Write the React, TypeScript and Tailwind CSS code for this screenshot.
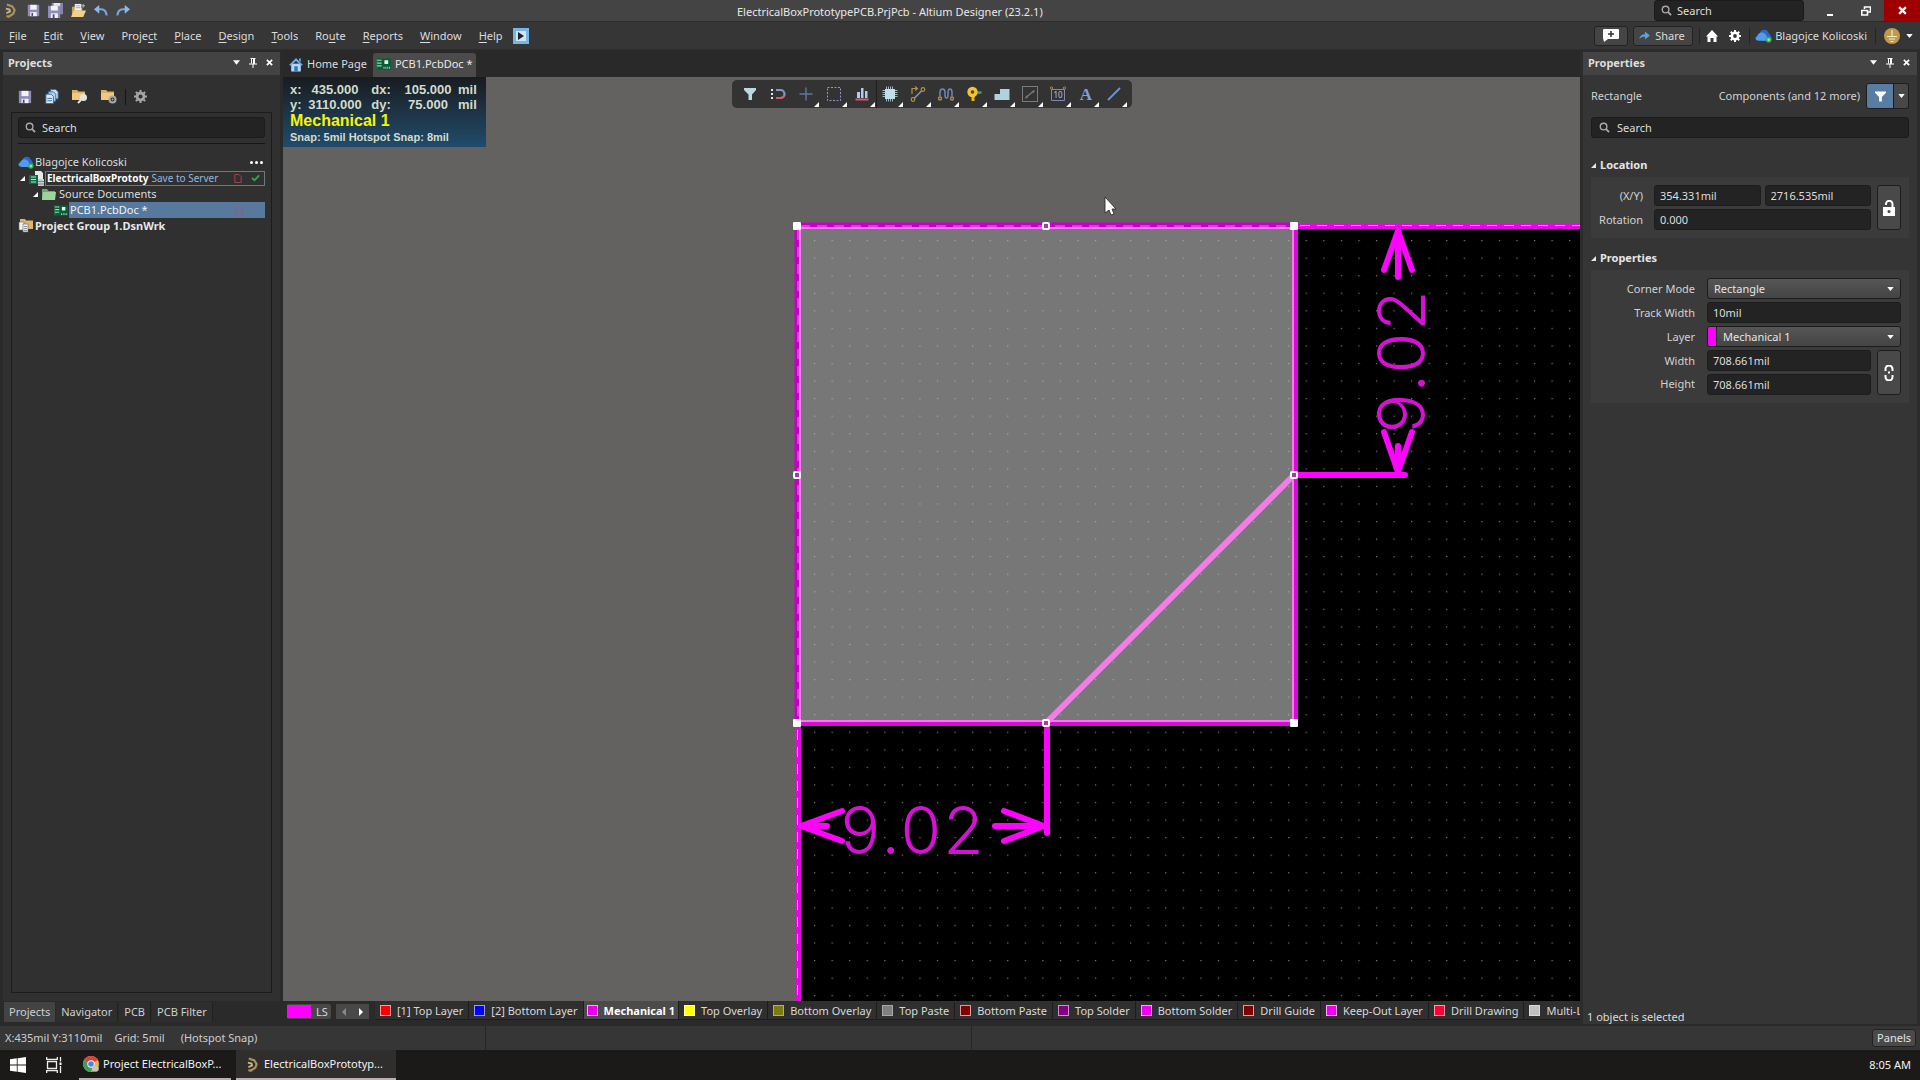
import type { ReactNode } from 'react';

/* ---------- small icons ---------- */

function Altium({ className }: { className: string }) {
  return (
    <svg viewBox="0 0 12 16" className={className} fill="none" stroke="#a8935a" strokeWidth="2.400">
      <path d="M2 1.500L8 3.500L10.500 7.500L9 11.500L4 14.800L1.500 14" />
      <path d="M1 6L5 7L5.500 9L1.500 11" stroke="#c9b780" strokeWidth="2" />
    </svg>
  );
}

function Floppy({ className, back = false }: { className: string; back?: boolean }) {
  return (
    <svg viewBox="0 0 16 16" className={className}>
      {back && <path d="M4 0H16V12H4Z" fill="#8583a8" />}
      {back && <path d="M6 0H13V4H6Z" fill="#e6e6f4" />}
      <path d={back ? 'M0 3H13V16H0Z' : 'M1 1H15V15H1Z'} fill="#8f8db8" />
      <path d={back ? 'M3 3H10.500V8H3Z' : 'M4 1H12V7H4Z'} fill="#f1f1f8" />
      <path d={back ? 'M3 11H10.500V16H3Z' : 'M4 10H12V15H4Z'} fill="#f1f1f8" />
      <path d={back ? 'M5 12H7V16H5Z' : 'M5.500 11H7.500V15H5.500Z'} fill="#4c4b66" />
    </svg>
  );
}

function OpenFolder({ className }: { className: string }) {
  return (
    <svg viewBox="0 0 16 16" className={className}>
      <path d="M1 4H6L7 5H12V14H1Z" fill="#c9a35e" />
      <path d="M4 1H11V8H4Z" fill="#f2f2f2" />
      <path d="M5 3H10M5 5H10" stroke="#9aa" />
      <path d="M3 8H16L13 15H0Z" fill="#f3d08a" />
      <path d="M13 1V5M11 3H15" stroke="#9cc3ee" />
    </svg>
  );
}

function Arrow({ className }: { className: string }) {
  return (
    <svg viewBox="0 0 16 16" className={className} fill="none" stroke="#7aa7dc">
      <path d="M3 6H8C12 6 14 9 14.500 13" strokeWidth="2.500" />
      <path d="M0 6L6 1V11Z" fill="#8fb8e8" stroke="none" />
    </svg>
  );
}

function Magnifier({ className }: { className: string }) {
  return (
    <svg viewBox="0 0 12 12" className={className} fill="none" stroke="#a9a9a9" strokeWidth="1.500">
      <circle cx="5" cy="5" r="3.600" />
      <path d="M7.800 7.800L11 11" strokeWidth="2" />
    </svg>
  );
}

function Cloud({ className }: { className: string }) {
  return (
    <svg viewBox="0 0 18 14" className={className}>
      <path d="M5 4C6 0 12 -1 14 3C15.500 5 18 8 17.500 10.500C17 12 15.500 12 14.500 12H7Z" fill="#2d67c8" />
      <path d="M4 12C0 12 -0.500 8 2.500 7C3 3.500 8 2 10.500 4.500C12.500 6 12 7.500 13 8.500C14.500 10 14 12 12 12Z" fill="#4f9cf0" />
      <circle cx="14.500" cy="11" r="3" fill="#35b050" />
      <circle cx="14.500" cy="11" r="1.500" fill="#8fe39d" />
    </svg>
  );
}

function PcbIcon({ className }: { className: string }) {
  return (
    <svg viewBox="0 0 16 12" className={className}>
      <path d="M0 0H16V12H0Z" fill="#0d5a38" />
      <path d="M1 2H6M1 5H6M1 8H6" stroke="#8fe0b4" strokeWidth="1.200" />
      <path d="M1 0.500V11" stroke="#3aa873" strokeDasharray="1 1" />
      <path d="M9 2H13V6H9Z" fill="#d8fbe8" />
      <path d="M8 10H15" stroke="#8fe0b4" strokeWidth="2" strokeDasharray="1 1" />
    </svg>
  );
}

function Caret({ className }: { className: string }) {
  return (
    <svg viewBox="0 0 8 5" className={className} fill="currentColor">
      <path d="M0 0H8L4 5Z" />
    </svg>
  );
}

function Corner({ className }: { className: string }) {
  return (
    <svg viewBox="0 0 5 5" className={className} fill="currentColor">
      <path d="M5 0V5H0Z" />
    </svg>
  );
}

function Pin({ className }: { className: string }) {
  return (
    <svg viewBox="0 0 8 10" className={className} fill="none" stroke="currentColor">
      <path d="M1.500 0.500H6.500M2.500 0.500V5.500M0 6H8M4 6V10" />
      <path d="M5 0V6" strokeWidth="2" />
    </svg>
  );
}

function Cross({ className }: { className: string }) {
  return (
    <svg viewBox="0 0 8 8" className={className} stroke="currentColor" strokeWidth="2">
      <path d="M1 1L7 7M7 1L1 7" />
    </svg>
  );
}

function Gear({ className }: { className: string }) {
  return (
    <svg viewBox="0 0 14 14" className={className} fill="none" stroke="currentColor">
      <circle cx="7" cy="7" r="3.700" strokeWidth="3" />
      <path d="M7 0V3M7 11V14M0 7H3M11 7H14M2 2L4.200 4.200M9.800 9.800L12 12M2 12L4.200 9.800M9.800 4.200L12 2" strokeWidth="2.200" />
    </svg>
  );
}

function Funnel({ className }: { className: string }) {
  return (
    <svg viewBox="0 0 12 12" className={className} fill="currentColor">
      <path d="M0 0.500H12V2L7.500 6.500V11.500H4.500V6.500L0 2Z" />
    </svg>
  );
}

function DocMark({ className }: { className: string }) {
  return (
    <svg viewBox="0 0 8 10" className={className} fill="none" stroke="currentColor">
      <path d="M0.500 0.500H5L7.500 3V9.500H0.500Z" />
    </svg>
  );
}

/* ---------- title and menu ---------- */

function SearchBox({ id, className }: { id: string; className: string }) {
  return (
    <div className={`flex items-center rounded-[3px] border border-[#1b1b1b] bg-[#232323] ${className}`}>
      <label htmlFor={id} aria-label="Search">
        <Magnifier className="size-[11px]" />
      </label>
      <input
        id={id}
        type="text"
        placeholder="Search"
        className="w-full min-w-0 bg-transparent text-[#dedede] outline-none placeholder:text-[#dedede]"
      />
    </div>
  );
}

function TitleBar() {
  return (
    <header className="relative flex h-[22px] shrink-0 items-center border-b border-[#2c2c2c] bg-[#444444]">
      <div className="flex items-center gap-2 pl-[5px]">
        <Altium className="h-[15px] w-[11px]" />
        <button aria-label="Save" className="ml-[3px]"><Floppy className="size-[13px]" /></button>
        <button aria-label="Save all"><Floppy back className="size-[15px]" /></button>
        <button aria-label="Open"><OpenFolder className="size-[15px]" /></button>
        <button aria-label="Undo"><Arrow className="size-[14px]" /></button>
        <button aria-label="Redo"><Arrow className="size-[14px] -scale-x-100" /></button>
      </div>
      <h1 className="absolute left-[737px] top-1 leading-4 text-[#e8e8e8]">
        ElectricalBoxPrototypePCB.PrjPcb - Altium Designer (23.2.1)
      </h1>
      <div className="ml-auto flex h-full items-center">
        <SearchBox id="search-global" className="mr-2 h-[21px] w-[150px] gap-[5px] px-[6px]" />
        <button aria-label="Minimize" className="flex h-full w-9 items-center justify-center">
          <span className="mt-2 h-[2px] w-[6px] bg-white" />
        </button>
        <button aria-label="Restore" className="flex h-full w-9 items-center justify-center">
          <svg viewBox="0 0 10 10" className="size-[10px]" fill="none" stroke="#fff">
            <path d="M3.500 3V1H9.500V6H7" strokeWidth="1.600" />
            <path d="M0.800 4.500H6.500V9H0.800Z" strokeWidth="1.600" />
          </svg>
        </button>
        <button aria-label="Close" className="flex h-full w-9 items-center justify-center bg-[#9c0000] text-white">
          <Cross className="size-[9px]" />
        </button>
      </div>
    </header>
  );
}

const MENU: [string, string, string][] = [
  ['', 'F', 'ile'], ['', 'E', 'dit'], ['', 'V', 'iew'], ['Proje', 'c', 't'], ['', 'P', 'lace'], ['', 'D', 'esign'],
  ['', 'T', 'ools'], ['Ro', 'u', 'te'], ['', 'R', 'eports'], ['', 'W', 'indow'], ['', 'H', 'elp'],
];

function MenuBar() {
  return (
    <div className="flex h-7 shrink-0 items-center border-b border-[#2d2d2d] bg-[#363636]">
      <nav className="flex items-center gap-[17px] pl-[9px]">
        {MENU.map(([a, b, c]) => (
          <button key={a + b + c} className="text-[#dcdcdc]">
            {a}<span className="underline underline-offset-2">{b}</span>{c}
          </button>
        ))}
        <button aria-label="Run" className="-ml-[7px] flex size-4 items-center justify-center bg-[#74b6e6]">
          <svg viewBox="0 0 10 10" className="size-[10px] bg-[#cfe6f6]"><path d="M2 1L8 5L2 9Z" fill="#222" /></svg>
        </button>
      </nav>
      <div className="ml-auto flex items-center pr-[7px] text-[#dcdcdc]">
        <button aria-label="Add comment" className="mr-[5px] flex h-5 w-[34px] items-center justify-center rounded-[3px] border border-[#222] bg-[#454545]">
          <svg viewBox="0 0 16 13" className="h-[13px] w-4">
            <path d="M1 0H15Q16 0 16 1V9Q16 10 15 10H5L1 13L0 9V1Q0 0 1 0Z" fill="#fff" />
            <path d="M8 2V8M5 5H11" stroke="#333" strokeWidth="1.500" />
          </svg>
        </button>
        <button className="flex h-5 w-[60px] items-center gap-[5px] rounded-[3px] border border-[#222] bg-[#454545] px-[5px]">
          <svg viewBox="0 0 12 10" className="h-[9px] w-[11px] shrink-0">
            <path d="M0 9C1 5 3 3.500 6.500 3.500V0.500L12 5L6.500 9.500V6.500C4 6.500 2 7 0 9Z" fill="#57a3e2" />
          </svg>
          Share
        </button>
        <span className="ml-[6px] h-4 w-px bg-[#242424]" />
        <button aria-label="Home" className="ml-[6px]">
          <svg viewBox="0 0 12 12" className="size-3" fill="#fff"><path d="M6 0L12 6.500H10.500V12H7.500V8H4.500V12H1.500V6.500H0Z" /></svg>
        </button>
        <button aria-label="Settings" className="ml-[11px] text-white"><Gear className="size-3" /></button>
        <span className="ml-2 mr-[5px] h-4 w-px bg-[#242424]" />
        <button className="flex items-center gap-[3px]"><Cloud className="h-[14px] w-[17px]" />Blagojce Kolicoski</button>
        <span className="ml-2 mr-[8px] h-4 w-px bg-[#242424]" />
        <button aria-label="Account" className="flex items-center gap-[6px] text-white">
          <svg viewBox="0 0 16 16" className="size-4">
            <circle cx="8" cy="8" r="8" fill="#c0994b" />
            <path d="M8 2V8M3 8.500H13M5 11H11M6.500 13.500H9.500" stroke="#f8ecca" strokeWidth="1.200" />
          </svg>
          <Caret className="h-[4px] w-[7px]" />
        </button>
      </div>
    </div>
  );
}

/* ---------- left panel ---------- */

function PanelHeader({ title }: { title: string }) {
  return (
    <div className="flex h-[23px] shrink-0 items-center bg-[#434343] pb-[2px] pl-[5px] pr-[7px] text-white">
      <h2 className="font-bold text-[#dedede]">{title}</h2>
      <button aria-label={`${title} menu`} className="ml-auto"><Caret className="h-[5px] w-[7px]" /></button>
      <button aria-label={`Pin ${title}`} className="ml-[9px]"><Pin className="h-[10px] w-2" /></button>
      <button aria-label={`Close ${title}`} className="ml-[9px]"><Cross className="size-[7px]" /></button>
    </div>
  );
}

function FolderIcon({ className, children }: { className: string; children?: ReactNode }) {
  return (
    <svg viewBox="0 0 16 15" className={className}>
      <path d="M0 1H5L6.500 2.500H13V11H0Z" fill="#dcae62" />
      <path d="M0 4H13V11H0Z" fill="#efc886" />
      {children}
    </svg>
  );
}

function ProjectsPanel() {
  return (
    <aside className="flex w-[283px] shrink-0 flex-col bg-[#2a2a2a] pl-[3px] pt-[2px]">
      <div className="mr-[3px] flex min-h-0 flex-1 flex-col bg-[#303030]">
        <PanelHeader title="Projects" />
        <div className="flex h-[37px] shrink-0 items-center gap-[13px] pl-[15px] pt-[6px]">
          <button aria-label="Save project"><Floppy className="size-[14px]" /></button>
          <button aria-label="Copy documents">
            <svg viewBox="0 0 14 16" className="h-[15px] w-[14px]" stroke="#356da6">
              <path d="M5.500 0.500H11L13.500 3V10.500H5.500Z" fill="#cfe2f5" />
              <path d="M3 3H8.500L11 5.500V13H3Z" fill="#b5d2ee" />
              <path d="M0.500 5.500H6L8.500 8V15.500H0.500Z" fill="#ddebf8" />
              <path d="M2 10H7M2 12.500H7" />
            </svg>
          </button>
          <button aria-label="Find in folder">
            <FolderIcon className="h-[15px] w-4">
              <circle cx="11.500" cy="8.500" r="3.500" fill="#e4e4e4" />
              <path d="M9 11L6 14" stroke="#e4e4e4" strokeWidth="2" />
            </FolderIcon>
          </button>
          <button aria-label="Folder options">
            <FolderIcon className="h-[15px] w-4">
              <circle cx="11.500" cy="10.500" r="3" fill="#303030" stroke="#a9a9a9" strokeWidth="2" />
              <circle cx="11.500" cy="10.500" r="1" fill="#a9a9a9" />
            </FolderIcon>
          </button>
          <span className="-ml-[5px] h-4 w-px bg-[#151515]" />
          <button aria-label="Panel settings" className="-ml-[5px] text-[#a5a5a5]"><Gear className="size-[13px]" /></button>
        </div>
        <div className="mx-2 mb-2 flex min-h-0 flex-1 flex-col border border-[#1c1c1c] px-[6px] pt-1">
          <SearchBox id="search-projects" className="h-[21px] shrink-0 gap-[6px] px-[6px]" />
          <hr className="mb-[10px] mt-[5px] border-[#161616]" />
          <ul className="text-[#dcdcdc]">
            <li className="flex h-4 items-center gap-px pr-[2px]">
              <Cloud className="h-[13px] w-4" />Blagojce Kolicoski
              <button aria-label="Server menu" className="ml-auto flex gap-[2px]">
                <span className="size-[3px] rounded-full bg-white" />
                <span className="size-[3px] rounded-full bg-white" />
                <span className="size-[3px] rounded-full bg-white" />
              </button>
            </li>
            <li className="flex h-4 items-center pl-[2px]">
              <Corner className="mr-1 size-[5px] text-white" />
              <svg viewBox="0 0 16 15" className="h-[15px] w-4 shrink-0">
                <path d="M6 0H12L14 2V10H6Z" fill="#e6ebe8" />
                <path d="M0 4H9V13H0Z" fill="#0d6a42" />
                <path d="M2 6H7M2 8.500H7M2 11H7" stroke="#a8efc9" />
                <path d="M9 8H15V15H9Z" fill="#c6ced2" />
                <path d="M9 10.500H15M9 13H15" stroke="#7d878d" />
              </svg>
              <div className="flex h-[15px] flex-1 items-center border border-[#6c7a7d] pr-[4px] text-[10px]">
                <span className="pl-px font-bold text-white">ElectricalBoxPrototy</span>
                <a href="#save" className="ml-[3px] text-[#93b6e2]">Save to Server</a>
                <DocMark className="ml-auto h-[9px] w-2 shrink-0 text-[#a84c54]" />
                <svg viewBox="0 0 10 8" className="ml-[9px] h-2 w-[9px] shrink-0" fill="none" stroke="#2fa552" strokeWidth="2.200"><path d="M1 4L4 6.500L9 1" /></svg>
              </div>
            </li>
            <li className="flex h-4 items-center pl-[15px]">
              <Corner className="mr-1 size-[5px] text-white" />
              <svg viewBox="0 0 14 12" className="mr-[3px] h-3 w-[14px]">
                <path d="M0 1H5L6.500 3H13V12H0Z" fill="#6aa86e" /><path d="M1 4H14L13 12H0Z" fill="#9fd39b" />
              </svg>
              Source Documents
            </li>
            <li className="flex h-4 items-center pl-9">
              <PcbIcon className="h-[11px] w-[14px]" />
              <div className="ml-px flex h-4 flex-1 items-center bg-[#56799d] pl-px pr-[22px] text-[#eef3f8]">
                PCB1.PcbDoc *<DocMark className="ml-auto h-[9px] w-2 text-[#8a5f80]" />
              </div>
            </li>
            <li className="flex h-4 items-center gap-px font-bold text-[#e8e8e8]">
              <svg viewBox="0 0 16 14" className="h-[14px] w-4">
                <path d="M2 0H7L8 1.500H15V10H2Z" fill="#dfb46c" />
                <path d="M1 3H6V11H1Z" fill="#f0f0f0" stroke="#667" strokeWidth="0.600" />
                <path d="M5 5H10V13H5Z" fill="#f0f0f0" stroke="#667" strokeWidth="0.600" />
                <path d="M6 7.500H9M6 9.500H9M6 11.500H9" stroke="#778" strokeWidth="0.800" />
              </svg>
              Project Group 1.DsnWrk
            </li>
          </ul>
        </div>
      </div>
      <nav className="flex h-[23px] shrink-0 items-start gap-px pl-px pt-px text-[#cfcfcf]">
        <button className="h-[20px] bg-[#434343] px-[5px]">Projects</button>
        {['Navigator', 'PCB', 'PCB Filter'].map((t) => (
          <button key={t} className="h-[20px] border-r border-[#202020] bg-[#2e2e2e] px-[5px]">{t}</button>
        ))}
      </nav>
    </aside>
  );
}

/* ---------- board canvas ---------- */

const TOOLS: { name: string; art: ReactNode; menu: boolean }[] = [
  { name: 'Filter', menu: false, art: <path d="M2 2H14V4L10 8.500V14H6.500V8.500L2 4Z" fill="#b9d8e2" /> },
  { name: 'Snapping', menu: false, art: <>
    <path d="M6 4H10.500A4 4 0 0 1 10.500 12H6" fill="none" stroke="#8496c6" strokeWidth="2.200" />
    <path d="M6 12H10.500A4 4 0 0 0 14 10" fill="none" stroke="#d05a70" strokeWidth="2.200" />
    <path d="M1 4H3M1 8H3M1 12H3" stroke="#e2e6ee" strokeWidth="2" />
  </> },
  { name: 'Move', menu: true, art: <path d="M8 1.500V14.500M1.500 8H14.500" stroke="#6076a4" strokeWidth="1.400" /> },
  { name: 'Select area', menu: true, art: <rect x="1.500" y="1.500" width="13" height="13" fill="none" stroke="#8b98cc" strokeDasharray="2 1.500" /> },
  { name: 'Align', menu: true, art: <>
    <path d="M3 6H6V12H3ZM7 2H9.500V12H7ZM11 5H13.500V12H11Z" fill="#a8cdee" /><path d="M1.500 13.500H14.500" stroke="#d05a70" strokeWidth="2" />
  </> },
  { name: 'Place component', menu: true, art: <>
    <path d="M0.500 4.500H15.500M0.500 6.500H15.500M0.500 8.500H15.500M0.500 10.500H15.500" stroke="#9fb2ba" />
    <path d="M4.500 0.500V15.500M6.500 0.500V15.500M8.500 0.500V15.500M10.500 0.500V15.500" stroke="#9fb2ba" />
    <rect x="3" y="3" width="10" height="10" fill="#bfe0ea" />
  </> },
  { name: 'Route track', menu: true, art: <g fill="none" stroke="#b3923f" strokeWidth="1.200">
    <path d="M2 8V2.500H7M5 0.500L7.500 2.500L5 4.500" /><circle cx="13" cy="3.500" r="1.800" /><circle cx="3" cy="13.500" r="1.800" /><path d="M4.500 12L11.500 5" stroke="#8a97a8" strokeWidth="1.600" />
  </g> },
  { name: 'Tune length', menu: true, art: <g fill="none" strokeWidth="1.500">
    <path d="M2 10.500V6.500Q2 3 4.500 3T7 6.500V9Q7 12 8.500 12T10 9V6.500Q10 3 12 3T14 6.500V10.500" stroke="#6f86b6" /><circle cx="2" cy="12.500" r="1.500" stroke="#a58a48" /><circle cx="14" cy="12.500" r="1.500" stroke="#a58a48" />
  </g> },
  { name: 'Place via', menu: true, art: <>
    <path d="M8 6.500H15.500" stroke="#3fa45b" strokeWidth="2.500" /><path d="M7 9V15" stroke="#e3b92c" strokeWidth="3" />
    <circle cx="6.500" cy="6" r="5.200" fill="#f0c52f" /><circle cx="6.500" cy="6" r="1.800" fill="#4c4020" />
  </> },
  { name: 'Place polygon', menu: true, art: <path d="M0.500 8H6V3H15.500V14H0.500Z" fill="#aed2de" /> },
  { name: 'Place keepout', menu: true, art: <>
    <rect x="0.500" y="0.500" width="15" height="15" fill="none" stroke="#7c7c7c" /><path d="M4 11.500L11.500 5" stroke="#777" strokeWidth="1.400" /><path d="M2.500 12.500L5 9L6 12Z" fill="#777" /><path d="M13 4L10 5L11.500 7.500Z" fill="#777" />
  </> },
  { name: 'Place dimension', menu: true, art: <>
    <path d="M1.500 3V14.500H14.500V3" fill="none" stroke="#7d8bb0" /><path d="M2 3.500H14" stroke="#7d8bb0" />
    <circle cx="1.500" cy="2" r="1.200" fill="none" stroke="#a58a48" /><circle cx="14.500" cy="2" r="1.200" fill="none" stroke="#a58a48" />
    <text x="8" y="12" fontSize="8" textAnchor="middle" fill="#b4c3dc">10</text>
  </> },
  { name: 'Place string', menu: true, art: <text x="8" y="14" fontSize="17" fontWeight="700" textAnchor="middle" fill="#7da2dc" className="font-['Liberation_Serif']">A</text> },
  { name: 'Place line', menu: true, art: <path d="M2 14L14 2" stroke="#6f95cf" strokeWidth="1.800" /> },
];

function ActiveBar() {
  return (
    <div className="absolute left-1/2 top-[3px] flex h-7 -translate-x-1/2 items-center rounded-[5px] bg-[#333333] px-1">
      {TOOLS.map((t) => (
        <button
          key={t.name}
          aria-label={t.name}
          className={`relative flex h-7 w-7 items-center justify-center ${t.name === 'Place component' ? 'border-l border-[#1e1e1e]' : ''}`}
        >
          <svg viewBox="0 0 16 16" className="size-4">{t.art}</svg>
          {t.menu && <Corner className="absolute bottom-px right-px size-[5px] text-white" />}
        </button>
      ))}
    </div>
  );
}

function HeadsUp() {
  return (
    <div className="absolute left-0 top-0 h-[70px] w-[203px] bg-linear-to-b from-[#181c20] to-[#1f4c6c] pl-[7px] pt-[5px] font-['Liberation_Sans',sans-serif] font-bold text-[#d3dccb]">
      <div className="grid w-[188px] grid-cols-[16px_58px_34px_60px_1fr] text-[13px] leading-[15px]">
        <span>x:</span><span className="text-center">435.000</span><span className="text-center">dx:</span><span className="text-center">105.000</span><span>mil</span>
        <span>y:</span><span className="text-center">3110.000</span><span className="text-center">dy:</span><span className="text-center">75.000</span><span>mil</span>
      </div>
      <p className="text-base leading-[17px] text-[#f4f40a]">Mechanical 1</p>
      <p className="text-[11px] leading-4">Snap: 5mil Hotspot Snap: 8mil</p>
    </div>
  );
}

const CORNERS = [[797, 226], [1294, 226], [797, 723], [1294, 723]];
const MIDS = [[1046, 226], [797, 475], [1294, 475], [1046, 723]];

function Board() {
  return (
    <svg viewBox="283 77 1297 924" preserveAspectRatio="xMinYMin slice" className="absolute inset-0 size-full bg-[#646260]">
      <defs>
        <pattern id="grid" x="814" y="240" width="17.560" height="17.560" patternUnits="userSpaceOnUse">
          <rect width="1.200" height="1.200" fill="#7d8378" />
        </pattern>
        <pattern id="gridSel" x="814" y="240" width="17.560" height="17.560" patternUnits="userSpaceOnUse">
          <rect width="1.200" height="1.200" fill="#a6a6a6" />
        </pattern>
      </defs>
      <rect x="797" y="226" width="2000" height="2000" fill="#000" />
      <rect x="802" y="232" width="2000" height="2000" fill="url(#grid)" />
      <rect x="797" y="226" width="497" height="497" fill="#777777" />
      <rect x="802" y="232" width="490" height="488" fill="url(#gridSel)" />

      {/* board outline */}
      <g fill="none" stroke="#e00ae0" strokeWidth="6">
        <path d="M1294 226H3000" />
        <path d="M798 723V3000" />
      </g>
      <path d="M1300 225.500H3000" stroke="#ffb4ff" strokeDasharray="10 7" />
      <path d="M797.500 730V3000" stroke="#ffb4ff" strokeDasharray="10 7" />

      {/* selected rectangle */}
      <g fill="none">
        <path d="M797 225H1294M797 226V723" stroke="#c400c4" strokeWidth="5" />
        <path d="M797 228H1294M800 226V723" stroke="#f67af0" strokeWidth="2" />
        <path d="M800 226H1294M798 230V723" stroke="#f67af0" strokeWidth="1" strokeDasharray="10 7" />
        <path d="M1296 226V725M797 724H1298" stroke="#d80ad8" strokeWidth="4" />
        <path d="M1293 228V722M800 721H1293" stroke="#f67af0" strokeWidth="2" />
        <path d="M1294 475L1046 723" stroke="#f07de8" strokeWidth="6" />
      </g>

      {/* dimensions */}
      <g fill="none" stroke="#fb05fb" strokeWidth="6" strokeLinecap="round" strokeLinejoin="round">
        <path d="M1298 475H1405" />
        <path d="M1384 270L1398 231L1412 270M1398 231V277" />
        <path d="M1384 432L1398 472L1412 432M1398 472V446" />
        <path d="M1047 723V833" />
        <path d="M842 811L801 826L842 841M801 826H827" />
        <path d="M1004 811L1044 826L1004 841M1044 826H995" />
      </g>
      <g fill="#d412d4" fontSize="66" fontWeight="300" className="font-['Inter',sans-serif] tabular-nums">
        <text x="912" y="854" textAnchor="middle">9.02</text>
        <text transform="translate(1425 362) rotate(-90)" textAnchor="middle">9.02</text>
      </g>

      {CORNERS.map(([x, y]) => <rect key={`${x}-${y}`} x={x - 4} y={y - 4} width="8" height="8" rx="1" fill="#fff" />)}
      {MIDS.map(([x, y]) => <rect key={`${x}-${y}`} x={x - 3} y={y - 3} width="6" height="6" rx="1" fill="#a040a0" stroke="#fff" strokeWidth="2" />)}
      <path d="M1105 197V213L1109 210L1111 215L1114 214L1112 209H1116Z" fill="#fff" stroke="#222" strokeWidth="0.800" />
    </svg>
  );
}

const LAYERS: [string, string, string][] = [
  ['[1] Top Layer', 'bg-[#ff0000]', 'border-[#ff9a9a]'],
  ['[2] Bottom Layer', 'bg-[#0000ff]', 'border-[#9a9aff]'],
  ['Mechanical 1', 'bg-[#e800e8]', 'border-[#ffa0ff]'],
  ['Top Overlay', 'bg-[#ffff00]', 'border-[#ffff9a]'],
  ['Bottom Overlay', 'bg-[#7c7c0c]', 'border-[#b4b45a]'],
  ['Top Paste', 'bg-[#808080]', 'border-[#a8a8a8]'],
  ['Bottom Paste', 'bg-[#800000]', 'border-[#d0a0a0]'],
  ['Top Solder', 'bg-[#800080]', 'border-[#c890c8]'],
  ['Bottom Solder', 'bg-[#f000f0]', 'border-[#ffa0ff]'],
  ['Drill Guide', 'bg-[#800000]', 'border-[#d0a0a0]'],
  ['Keep-Out Layer', 'bg-[#f000f0]', 'border-[#ffa0ff]'],
  ['Drill Drawing', 'bg-[#ff0030]', 'border-[#ff9aa8]'],
  ['Multi-Layer', 'bg-[#c0c0c0]', 'border-[#d8d8d8]'],
];

function LayerTabs() {
  return (
    <div className="flex h-[23px] shrink-0 items-start overflow-hidden bg-[#2a2a2a] text-[#d8d8d8]">
      <button className="ml-1 mt-[3px] flex h-[15px] w-11 shrink-0 items-center rounded-[2px] bg-[#484848]">
        <span className="mr-[5px] h-[13px] w-6 bg-[#ff00ff]" />LS
      </button>
      <div className="ml-[5px] mr-[6px] mt-[3px] flex h-[15px] w-[33px] shrink-0 justify-around bg-[#484848]">
        <button aria-label="Scroll layers left"><svg viewBox="0 0 4 8" className="h-2 w-1" fill="#888"><path d="M4 0V8L0 4Z" /></svg></button>
        <button aria-label="Scroll layers right"><svg viewBox="0 0 4 8" className="h-2 w-1" fill="#fff"><path d="M0 0V8L4 4Z" /></svg></button>
      </div>
      {LAYERS.map(([name, fill, edge]) => (
        <button
          key={name}
          className={`flex h-[19px] shrink-0 items-center gap-[6px] border-b border-r border-[#1d1d1d] pt-px ${
            name === 'Mechanical 1' ? 'bg-[#4b4b4b] px-[3px] font-bold text-white' : 'bg-[#2f2f2f] px-[5px]'
          }`}
        >
          <span className={`size-[11px] border ${fill} ${edge}`} />
          {name}
        </button>
      ))}
    </div>
  );
}

function Workspace() {
  return (
    <main className="flex min-w-0 flex-1 flex-col bg-[#292929]">
      <nav className="flex h-[27px] shrink-0 items-end">
        <button className="flex h-6 items-center gap-1 pb-[2px] pl-[6px] pr-[6px] text-[#dcdcdc]">
          <svg viewBox="0 0 16 16" className="h-[15px] w-[14px]">
            <path d="M2.500 7H13.500V16H2.500Z" fill="#b5d7f7" /><path d="M0 8.500L8 0.500L16 8.500L14 9.500L8 4L2 9.500Z" fill="#62aef4" />
            <path d="M11.500 1H13.500V5L11.500 3Z" fill="#62aef4" /><path d="M6 10H10V16H6Z" fill="#3c78b8" />
          </svg>
          Home Page
        </button>
        <button className="flex h-6 items-center gap-1 rounded-t-[3px] bg-[#4b4b4b] px-[3px] pb-[2px] text-[#e8e8e8]">
          <PcbIcon className="h-[12px] w-[15px]" />PCB1.PcbDoc *
        </button>
      </nav>
      <div className="relative min-h-0 flex-1 overflow-hidden">
        <Board />
        <HeadsUp />
        <ActiveBar />
      </div>
      <LayerTabs />
    </main>
  );
}

/* ---------- properties panel ---------- */

function Field({ id, value, className = '' }: { id: string; value: string; className?: string }) {
  return (
    <input
      id={id}
      type="text"
      defaultValue={value}
      aria-label={id}
      className={`h-[21px] w-full min-w-0 rounded-[3px] border border-[#1d1d1d] bg-[#232323] px-[5px] text-[#dedede] outline-none ${className}`}
    />
  );
}

function Choice({ id, value, swatch = false }: { id: string; value: string; swatch?: boolean }) {
  return (
    <div className="relative flex h-[21px] overflow-hidden rounded-[3px] border border-[#1d1d1d] bg-linear-to-b from-[#565656] to-[#444444]">
      {swatch && <span className="w-[9px] shrink-0 border-r border-[#1d1d1d] bg-[#ff00ff]" />}
      <select id={id} defaultValue={value} className="w-full appearance-none bg-transparent px-[6px] text-[#e4e4e4] outline-none">
        <option>{value}</option>
      </select>
      <Caret className="pointer-events-none absolute right-[6px] top-2 h-1 w-[7px] text-white" />
    </div>
  );
}

function SectionTitle({ children }: { children: ReactNode }) {
  return (
    <h3 className="flex h-4 items-center gap-1 font-bold text-[#e6e6e6]">
      <Corner className="size-[5px]" />{children}
    </h3>
  );
}

const SIDE_BUTTON = 'row-span-2 flex items-center justify-center rounded-[3px] border border-[#1d1d1d] bg-[#494949]';

function PropertiesPanel() {
  return (
    <aside className="flex w-[340px] shrink-0 flex-col bg-[#2c2c2c] pl-[3px] pr-[3px] pt-[2px]">
      <PanelHeader title="Properties" />
      <div className="flex flex-1 flex-col bg-[#353535] pl-2 pr-2 pt-2 text-[#d2d2d2]">
        <div className="flex h-[26px] items-center">
          <span>Rectangle</span>
          <span className="ml-auto mr-[6px]">Components (and 12 more)</span>
          <button aria-label="Filter selection" className="flex h-[26px] w-7 items-center justify-center rounded-l-[3px] border border-[#1d1d1d] bg-[#587da2] text-white">
            <Funnel className="size-[11px]" />
          </button>
          <button aria-label="Filter options" className="flex h-[26px] w-[15px] items-center justify-center rounded-r-[3px] border border-l-0 border-[#1d1d1d] bg-[#484848] text-white">
            <Caret className="h-1 w-[7px]" />
          </button>
        </div>
        <SearchBox id="search-properties" className="mb-[19px] mt-[8px] h-[21px] gap-[7px] px-[7px]" />

        <SectionTitle>Location</SectionTitle>
        <section className="mb-3 mt-1 grid grid-cols-[1fr_217px_24px] items-center gap-x-[6px] gap-y-[3px] bg-[#3b3b3b] py-2 pr-2">
          <label htmlFor="X" className="pr-[5px] text-right">(X/Y)</label>
          <div className="flex gap-1"><Field id="X" value="354.331mil" className="flex-1" /><Field id="Y" value="2716.535mil" className="flex-1" /></div>
          <button aria-label="Lock" className={`${SIDE_BUTTON} h-[45px]`}>
            <svg viewBox="0 0 12 16" className="h-4 w-3">
              <path d="M3 5V4A3 3 0 0 1 9.500 4V8" fill="none" stroke="#fff" strokeWidth="2" /><path d="M0 7H12V16H0Z" fill="#fff" />
              <circle cx="6" cy="11.500" r="1.500" fill="#444" />
            </svg>
          </button>
          <label htmlFor="Rotation" className="pr-[5px] text-right">Rotation</label>
          <Field id="Rotation" value="0.000" />
        </section>

        <SectionTitle>Properties</SectionTitle>
        <section className="mt-1 grid grid-cols-[104px_1fr] items-center gap-x-3 gap-y-[3px] bg-[#3b3b3b] py-2 pr-2 text-right">
          <label htmlFor="corner">Corner Mode</label><Choice id="corner" value="Rectangle" />
          <label htmlFor="Track">Track Width</label><Field id="Track" value="10mil" />
          <label htmlFor="layer">Layer</label><Choice id="layer" value="Mechanical 1" swatch />
          <div className="flex h-[45px] flex-col justify-around">
            <label htmlFor="Width">Width</label><label htmlFor="Height">Height</label>
          </div>
          <div className="grid grid-cols-[1fr_24px] gap-x-[6px] gap-y-[3px]">
            <Field id="Width" value="708.661mil" />
            <button aria-label="Link width and height" className={SIDE_BUTTON}>
              <svg viewBox="0 0 10 16" className="h-4 w-[10px]" fill="none" stroke="#fff" strokeWidth="2">
                <path d="M1.500 6V4A3 3 0 0 1 8.500 4V6M1.500 10V12A3 3 0 0 0 8.500 12V10" /><path d="M5 6.500V9.500" strokeDasharray="2 1" />
              </svg>
            </button>
            <Field id="Height" value="708.661mil" />
          </div>
        </section>
        <p className="-mb-px -ml-1 mt-auto text-[#dcdcdc]">1 object is selected</p>
      </div>
    </aside>
  );
}

/* ---------- bottom bars ---------- */

function StatusBar() {
  return (
    <footer className="flex h-[26px] shrink-0 items-center border-t-2 border-[#2a2a2a] bg-[#363636] pr-1 text-[#cecece]">
      <div className="flex w-[486px] gap-3 self-stretch border-r border-[#262626] pl-[5px] pt-1">
        <span>X:435mil Y:3110mil</span><span>Grid: 5mil</span>
        <span className="ml-1">(Hotspot Snap)</span>
      </div>
      <div className="w-[486px] self-stretch border-r border-[#262626]" />
      <button className="ml-auto h-[18px] rounded-[3px] border border-[#222] bg-[#4a4a4a] px-1 text-[#e4e4e4]">Panels</button>
    </footer>
  );
}

function Taskbar() {
  return (
    <footer className="flex h-[30px] shrink-0 items-center bg-[#1b1a19] text-[#f2f2f2]">
      <button aria-label="Start" className="ml-[10px]">
        <svg viewBox="0 0 16 16" className="size-4" fill="#fff"><path d="M0 2.300L6.800 1.300V7.600H0ZM7.600 1.200L16 0V7.600H7.600ZM0 8.400H6.800V14.700L0 13.700ZM7.600 8.400H16V16L7.600 14.800Z" /></svg>
      </button>
      <button aria-label="Task view" className="ml-5">
        <svg viewBox="0 0 16 16" className="size-4" fill="none" stroke="#eee" strokeWidth="1.300">
          <path d="M1.500 4.500H10.500V11.500H1.500ZM0.700 0V2.300H11.300V0M0.700 16V13.700H11.300V16M14.500 0V4.500M14.500 9V16" /><path d="M13.500 5.500H15.500V8H13.500Z" fill="#fff" stroke="none" />
        </svg>
      </button>
      <button className="ml-[17px] flex h-full w-[152px] items-center gap-1 border-b-2 border-[#b9aeb0] pl-1">
        <svg viewBox="0 0 16 16" className="size-4 shrink-0">
          <circle cx="8" cy="8" r="8" fill="#e3b93b" /><path d="M8 8L1.100 4A8 8 0 0 1 14.900 4Z" fill="#d8433b" /><path d="M8 8L1.100 4A8 8 0 0 0 8 16L10 9Z" fill="#3f9d54" />
          <circle cx="8" cy="8" r="3.700" fill="#fff" /><circle cx="8" cy="8" r="2.800" fill="#4285f4" /><circle cx="12.500" cy="12.500" r="3.300" fill="#c9c4ba" />
        </svg>
        Project ElectricalBoxP...
      </button>
      <button className="ml-[5px] flex h-full w-40 items-center gap-[6px] border-b-2 border-[#b9aeb0] bg-[#2f2e2d] pl-[11px]">
        <Altium className="h-[15px] w-[11px] shrink-0" />ElectricalBoxPrototyp...
      </button>
      <time className="ml-auto pr-[9px]">8:05 AM</time>
    </footer>
  );
}

export default function App() {
  return (
    <div className="flex h-screen flex-col overflow-hidden whitespace-nowrap bg-[#2a2a2a] font-['Noto_Sans',sans-serif] text-[11px] leading-4">
      <TitleBar />
      <MenuBar />
      <div className="flex min-h-0 flex-1">
        <ProjectsPanel />
        <Workspace />
        <PropertiesPanel />
      </div>
      <StatusBar />
      <Taskbar />
    </div>
  );
}
